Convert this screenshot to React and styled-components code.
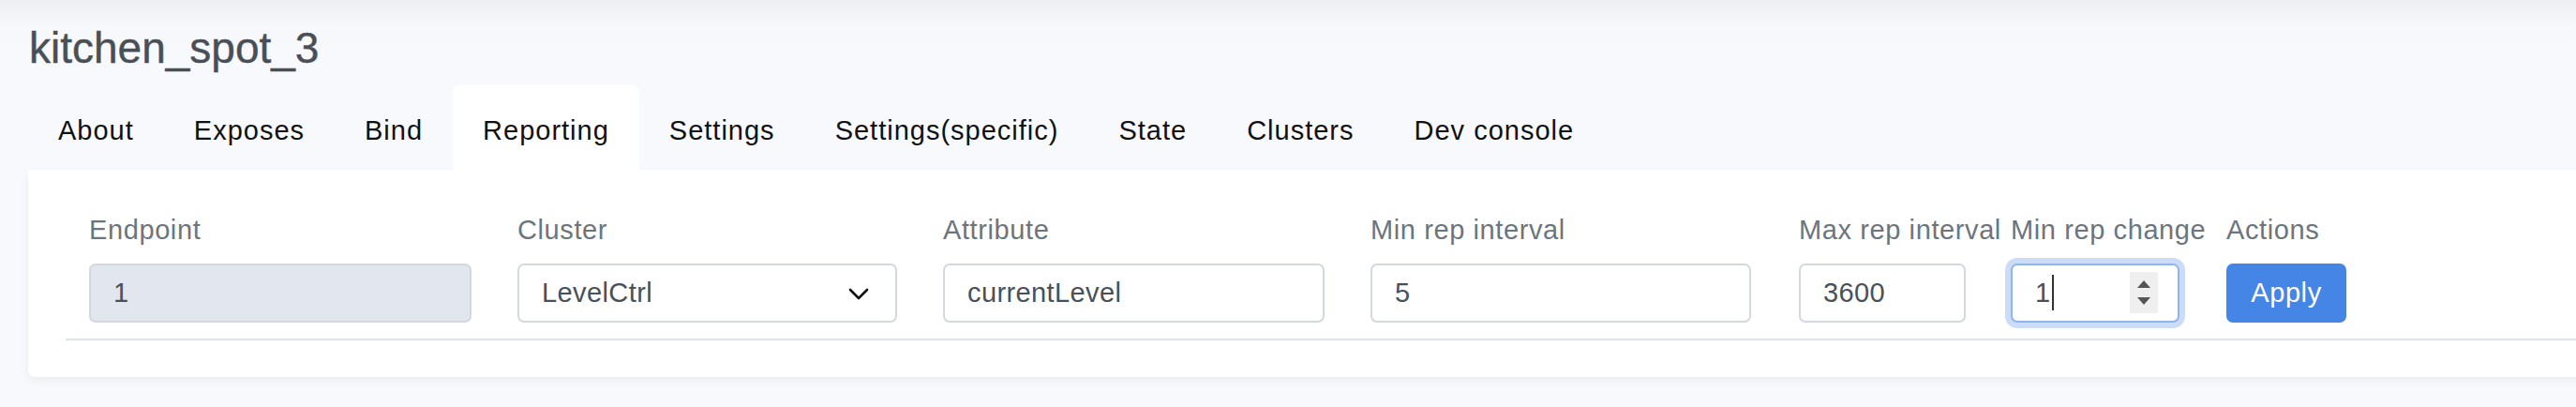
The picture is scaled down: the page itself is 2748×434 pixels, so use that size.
import styled, { createGlobalStyle } from "styled-components";

const GlobalStyle = createGlobalStyle`
    html, body {
        margin: 0;
        padding: 0;
        overflow: hidden;
    }
    body {
        background: linear-gradient(#eeeff3 0px, #f7f8fb 28px, #f8f9fc 60px);
        font-family: "Liberation Sans", Arial, sans-serif;
        min-height: 434px;
    }
`

const columns = [
    { label: "Endpoint", width: 457 },
    { label: "Cluster", width: 454 },
    { label: "Attribute", width: 456 },
    { label: "Min rep interval", width: 457 },
    { label: "Max rep interval", width: 226 },
    { label: "Min rep change", width: 230 },
    { label: "Actions", width: null },
]

const tabs = ["About", "Exposes", "Bind", "Reporting", "Settings", "Settings(specific)", "State", "Clusters", "Dev console"]

const App = () => {

    return (
        <Page>
            <GlobalStyle />
            <Title>kitchen_spot_3</Title>
            <TabBar>
                {tabs.map((t) => (
                    <Tab key={t} $active={t === "Reporting"}>{t}</Tab>
                ))}
            </TabBar>
            <Card>
                <Table>
                    {columns.map((c) => (
                        <HeadCell key={c.label}>{c.label}</HeadCell>
                    ))}
                    <BodyCell>
                        <Field $width={408} $disabled>1</Field>
                    </BodyCell>
                    <BodyCell>
                        <SelectField $width={405}>
                            <span>LevelCtrl</span>
                            <svg width="22" height="13" viewBox="0 0 22 13">
                                <polyline points="2,2 11,11 20,2" fill="none" stroke="#111" strokeWidth="2.6" strokeLinecap="round" strokeLinejoin="round" />
                            </svg>
                        </SelectField>
                    </BodyCell>
                    <BodyCell>
                        <Field $width={407}>currentLevel</Field>
                    </BodyCell>
                    <BodyCell>
                        <Field $width={406}>5</Field>
                    </BodyCell>
                    <BodyCell>
                        <Field $width={178}>3600</Field>
                    </BodyCell>
                    <BodyCell>
                        <NumberField $width={180}>
                            <span>1</span>
                            <Caret />
                            <Spinner>
                                <svg width="14" height="8" viewBox="0 0 14 8">
                                    <polygon points="7,0 14,8 0,8" fill="#555" />
                                </svg>
                                <svg width="14" height="8" viewBox="0 0 14 8">
                                    <polygon points="0,0 14,0 7,8" fill="#555" />
                                </svg>
                            </Spinner>
                        </NumberField>
                    </BodyCell>
                    <BodyCell>
                        <ApplyButton>Apply</ApplyButton>
                    </BodyCell>
                </Table>
            </Card>
        </Page>
    )
};

const Page = styled.div`
    padding: 24px 0 0 30px;
    min-height: 434px;
    box-sizing: border-box;
`
const Title = styled.h1`
    margin: 0 0 12px 1px;
    font-size: 46px;
    line-height: 1.2;
    font-weight: 400;
    letter-spacing: 0;
    color: #4a4f56;
    -webkit-text-stroke: 0.4px #4a4f56;
`
const TabBar = styled.div`
    display: flex;
    align-items: flex-end;
`
const Tab = styled.div`
    padding: 27px 32px 19px;
    font-size: 29px;
    line-height: 1.5;
    letter-spacing: 1px;
    color: #111;
    border-radius: 7px 7px 0 0;
    background: ${(p) => (p.$active ? "#ffffff" : "transparent")};
    white-space: nowrap;
`
const Card = styled.div`
    background: #ffffff;
    border-radius: 0 0 7px 7px;
    margin-right: -40px;
    padding: 35px 0 39px 40px;
    box-shadow: 0 4px 10px rgba(30, 40, 70, 0.06);
`
const Table = styled.div`
    display: grid;
    grid-template-columns: ${columns.map((c) => (c.width ? c.width + "px" : "1fr")).join(" ")};
`
const HeadCell = styled.div`
    padding: 8px 0 7px 25px;
    font-size: 29px;
    line-height: 1.5;
    letter-spacing: 0.6px;
    color: #6c757d;
    white-space: nowrap;
`
const BodyCell = styled.div`
    padding: 6.5px 0 17px 25px;
    border-bottom: 2px solid #dfe5ec;
`
const Field = styled.div`
    box-sizing: border-box;
    width: ${(p) => p.$width}px;
    height: 63px;
    padding: 0 24px;
    display: flex;
    align-items: center;
    border: 2px solid #d3d8de;
    border-radius: 7px;
    background: ${(p) => (p.$disabled ? "#e2e6ee" : "#ffffff")};
    font-size: 29px;
    letter-spacing: 0.4px;
    color: #4a5058;
`
const SelectField = styled(Field)`
    justify-content: space-between;
    padding-right: 28px;
    svg {
        margin-top: 2px;
    }
`
const NumberField = styled(Field)`
    padding-right: 21px;
    border-color: #8fb5ef;
    box-shadow: 0 0 0 6px #cbdcf8;
`
const Caret = styled.span`
    width: 2px;
    height: 38px;
    margin-left: 1px;
    background: #333;
`
const Spinner = styled.div`
    margin-left: auto;
    width: 30px;
    height: 44px;
    background: #efefef;
    display: flex;
    flex-direction: column;
    align-items: center;
    justify-content: center;
    gap: 10px;
`
const ApplyButton = styled.button`
    box-sizing: border-box;
    height: 63px;
    width: 128px;
    border: none;
    border-radius: 7px;
    background: #4585e6;
    color: #ffffff;
    font-family: "Liberation Sans", Arial, sans-serif;
    font-size: 29px;
    letter-spacing: 0.6px;
    padding: 0 24px;
`

export default App;
